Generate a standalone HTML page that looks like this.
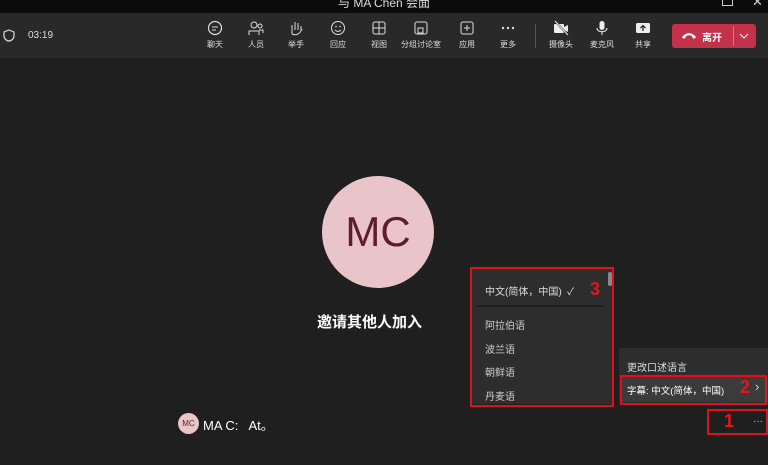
<html><head><style>
body{margin:0;width:768px;height:465px;background:#1f1f1f;font-family:"Liberation Sans","Noto Sans CJK SC",sans-serif;overflow:hidden;position:relative;color:#fff}
.a{position:absolute}
.ti{position:absolute;top:20px;width:40px;text-align:center;font-size:8px;color:#ddd}
.ti svg{display:block;margin:0 auto 3px}
.red{position:absolute;border:2.5px solid #e0111c;box-sizing:border-box}
.n{position:absolute;color:#e8141c;font-weight:bold;font-size:18px}
</style></head><body>
<div class="a" style="left:0;top:0;width:768px;height:13px;background:#0b0b0b"></div>
<div class="a" style="left:338px;top:-6px;font-size:12px;color:#ddd">与 MA Chen 会面</div>
<div class="a" style="left:722px;top:-5px;width:9px;height:9px;border:1px solid #ccc"></div>
<div class="a" style="left:752px;top:-6px;font-size:13px;color:#ccc">✕</div>
<div class="a" style="left:0;top:13px;width:768px;height:45px;background:#292929"></div>
<svg class="a" style="left:3px;top:29px" width="12" height="13" viewBox="0 0 12 13"><path d="M6 1 L11 3 V7 C11 10 8 12 6 12 C4 12 1 10 1 7 V3Z" fill="none" stroke="#ddd" stroke-width="1.2"/></svg>
<div class="a" style="left:28px;top:30px;font-size:10px;color:#ddd">03:19</div>
<div class="ti" style="left:195px"><svg width="16" height="16"><circle cx="8" cy="8" r="6.5" fill="none" stroke="#ddd" stroke-width="1.2"/><path d="M5 7h6M5 10h4" stroke="#ddd"/></svg>聊天</div>
<div class="ti" style="left:236px"><svg width="16" height="16"><circle cx="6" cy="5" r="3" fill="none" stroke="#ddd"/><circle cx="12" cy="6" r="2" fill="none" stroke="#ddd"/><path d="M1 15v-4h10v4M11 10h4v3" fill="none" stroke="#ddd"/></svg>人员</div>
<div class="ti" style="left:276px"><svg width="16" height="16"><path d="M4 14V5M7 10V2M10 10V3M13 10V6 M4 14 C8 16 12 14 14 9" fill="none" stroke="#ddd"/></svg>举手</div>
<div class="ti" style="left:318px"><svg width="16" height="16"><circle cx="8" cy="8" r="6.5" fill="none" stroke="#ddd"/><circle cx="6" cy="6.5" r=".8" fill="#ddd"/><circle cx="10" cy="6.5" r=".8" fill="#ddd"/><path d="M5 10c2 2 4 2 6 0" fill="none" stroke="#ddd"/></svg>回应</div>
<div class="ti" style="left:359px"><svg width="16" height="16"><rect x="2" y="2" width="12" height="12" rx="2" fill="none" stroke="#ddd"/><path d="M8 2v12M2 8h12" stroke="#ddd"/></svg>视图</div>
<div class="ti" style="left:396px;width:50px"><svg width="16" height="16"><rect x="2" y="2" width="12" height="12" rx="2" fill="none" stroke="#ddd"/><rect x="5" y="8" width="5" height="5" fill="none" stroke="#ddd"/></svg>分组讨论室</div>
<div class="ti" style="left:447px"><svg width="16" height="16"><rect x="2" y="2" width="12" height="12" rx="2" fill="none" stroke="#ddd"/><path d="M8 5v6M5 8h6" stroke="#ddd"/></svg>应用</div>
<div class="ti" style="left:488px"><svg width="16" height="16"><circle cx="3" cy="8" r="1.2" fill="#ddd"/><circle cx="8" cy="8" r="1.2" fill="#ddd"/><circle cx="13" cy="8" r="1.2" fill="#ddd"/></svg>更多</div>
<div class="a" style="left:535px;top:24px;width:1px;height:24px;background:#555"></div>
<div class="ti" style="left:541px"><svg width="16" height="16"><rect x="1" y="4" width="10" height="9" rx="1" fill="#eee"/><path d="M11 7l4-2v7l-4-2z" fill="#eee"/><path d="M2 1l13 14" stroke="#292929" stroke-width="2"/><path d="M2 1l13 14" stroke="#eee"/></svg>摄像头</div>
<div class="ti" style="left:582px"><svg width="16" height="16"><rect x="5.5" y="1" width="5" height="9" rx="2.5" fill="#eee"/><path d="M3 8c0 5 10 5 10 0M8 12v3" fill="none" stroke="#eee"/></svg>麦克风</div>
<div class="ti" style="left:623px"><svg width="16" height="16"><rect x="1" y="3" width="14" height="10" rx="1.5" fill="#eee"/><path d="M8 11V6M5.5 8L8 5.5 10.5 8" fill="none" stroke="#292929" stroke-width="1.3"/></svg>共享</div>
<div class="a" style="left:672px;top:24px;width:84px;height:24px;background:#c4314b;border-radius:3px"></div>
<svg class="a" style="left:681px;top:31px" width="16" height="10"><path d="M1 6c4-5 10-5 14 0l-2 2-2-2 0-1c-2-1-4-1-6 0v1l-2 2z" fill="#fff"/></svg>
<div class="a" style="left:702px;top:29px;font-size:10px;font-weight:bold">离开</div>
<div class="a" style="left:733px;top:26px;width:1px;height:20px;background:#d77"></div>
<svg class="a" style="left:738px;top:31px" width="12" height="10"><path d="M2 3l4 4 4-4" fill="none" stroke="#fff"/></svg>

<div class="a" style="left:322px;top:176px;width:112px;height:112px;border-radius:50%;background:#e9c5c9;color:#5e1d2b;font-size:42px;text-align:center;line-height:112px">MC</div>
<div class="a" style="left:317px;top:311px;font-size:15px;font-weight:bold">邀请其他人加入</div>
<div class="a" style="left:178px;top:413px;width:21px;height:21px;border-radius:50%;background:#e9c5c9;color:#5e1d2b;font-size:8px;text-align:center;line-height:21px">MC</div>
<div class="a" style="left:203px;top:415px;font-size:13px">MA C:&nbsp;&nbsp; At。</div>

<div class="a" style="left:472px;top:268px;width:140px;height:136px;background:#2d2d2d"></div>
<div class="a" style="left:608px;top:272px;width:4px;height:14px;background:#888;border-radius:2px"></div>
<div class="a" style="left:485px;top:283px;font-size:10px;color:#ddd">中文(简体，中国)&nbsp; ✓</div>
<div class="a" style="left:476px;top:305px;width:128px;height:2px;background:#1f1f1f"></div>
<div class="a" style="left:485px;top:317px;font-size:10px;color:#ccc">阿拉伯语</div>
<div class="a" style="left:485px;top:341px;font-size:10px;color:#ccc">波兰语</div>
<div class="a" style="left:485px;top:364px;font-size:10px;color:#ccc">朝鲜语</div>
<div class="a" style="left:485px;top:388px;font-size:10px;color:#ccc">丹麦语</div>
<div class="red" style="left:470px;top:267px;width:144px;height:140px"></div>
<div class="n" style="left:590px;top:279px">3</div>

<div class="a" style="left:619px;top:348px;width:149px;height:56px;background:#2d2d2d"></div>
<div class="a" style="left:622px;top:377px;width:143px;height:25px;background:#3b3b3b"></div>
<div class="a" style="left:627px;top:359px;font-size:10px;color:#ddd">更改口述语言</div>
<div class="a" style="left:627px;top:383px;font-size:9.5px;color:#fff">字幕: 中文(简体，中国)</div>
<div class="a" style="left:755px;top:379px;font-size:13px;color:#ccc">›</div>
<div class="red" style="left:620px;top:375px;width:147px;height:30px"></div>
<div class="n" style="left:740px;top:377px">2</div>
<div class="red" style="left:707px;top:409px;width:61px;height:26px"></div>
<div class="n" style="left:724px;top:411px">1</div>
<div class="a" style="left:753px;top:416px;font-size:10px;color:#ccc">···</div>
</body></html>
